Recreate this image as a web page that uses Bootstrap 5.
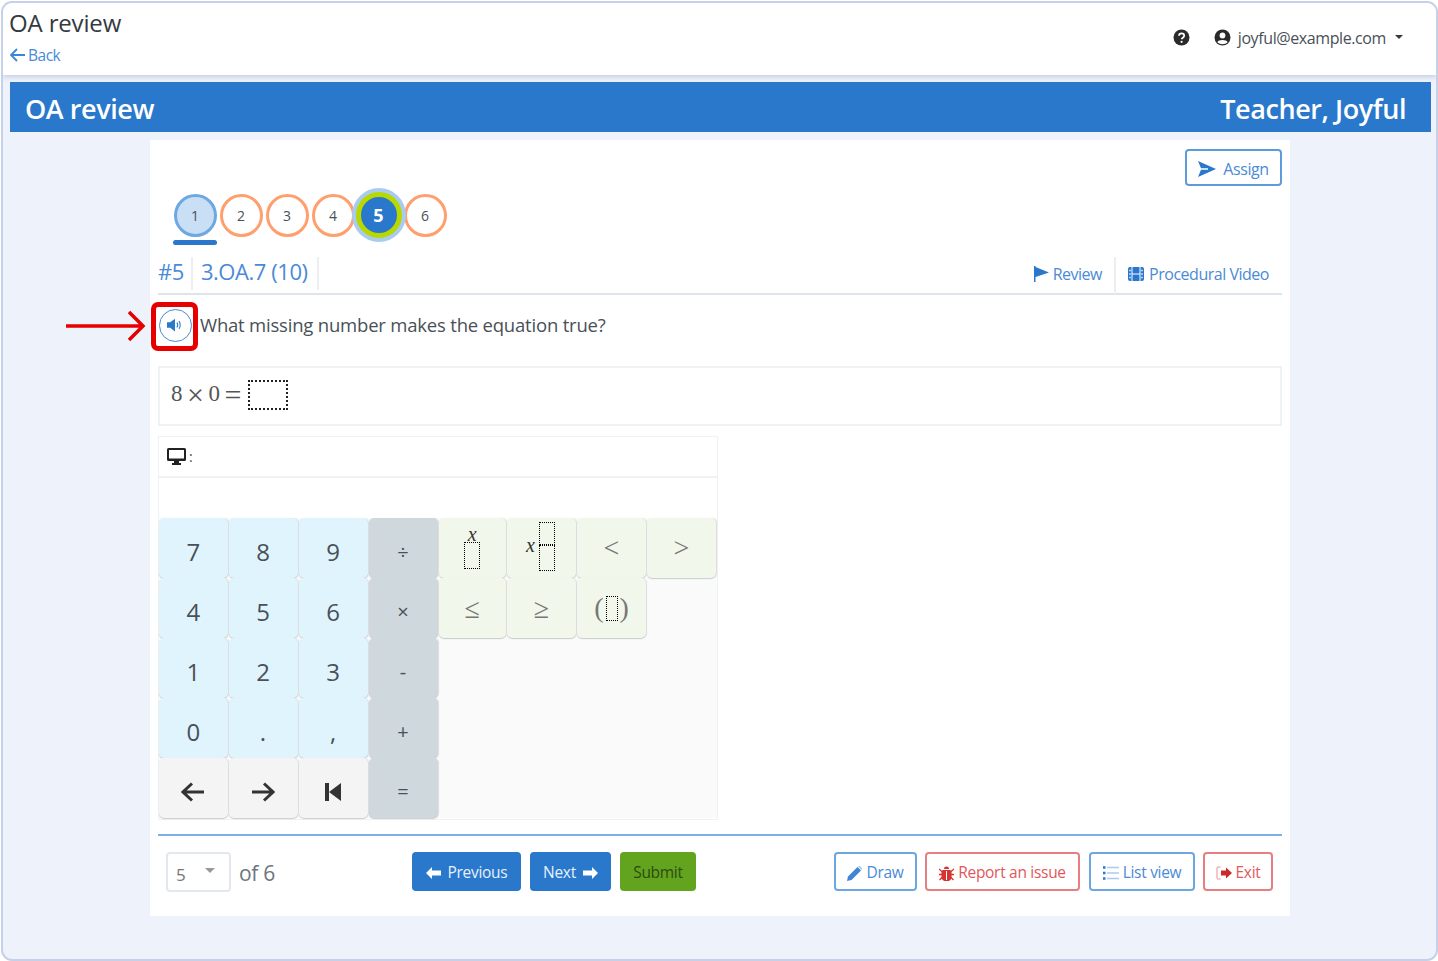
<!DOCTYPE html>
<html lang="en">
<head>
<meta charset="utf-8">
<title>OA review</title>
<link href="https://cdn.jsdelivr.net/npm/bootstrap@5.3.0/dist/css/bootstrap.min.css" rel="stylesheet">
<style>
html,body{height:961px;overflow:hidden;background:#fff}
body{font-family:"Open Sans","Noto Sans",sans-serif;color:#495057;font-size:16px;letter-spacing:-.3px}
a{text-decoration:none;color:#4a8ad6}
svg{display:block;flex:none}
.frame{margin:1px 0 0 1px;width:1437px;height:960px;border:2px solid #c6d0e8;border-radius:11px;background:#eef2fb;overflow:hidden;position:relative}
.topbar{height:72px;background:#fff;padding:4px 7px 0;box-shadow:0 2px 5px #c3cde2}
.apptitle{font-size:24px;font-weight:500;color:#343a40;line-height:32px;letter-spacing:-.15px;margin-left:-1px}
.backlink{font-size:15.5px;line-height:22px;margin-top:5px;gap:3px;letter-spacing:-.5px}
.usernav{margin:17px 26px 0 0;color:#343a40;gap:24px}
.usermail{font-size:16px;color:#495057;gap:7px;letter-spacing:-.4px}
.usermail span:first-of-type{padding-top:2px}
.caretdown{width:0;height:0;border-left:4px solid transparent;border-right:4px solid transparent;border-top:4px solid #343a40;margin:0 0 0 2px}
.banner{height:50px;margin:7px 5px 0 7px;background:#2a78cc;color:#fff;font-size:27px;font-weight:600;padding:2px 25px 0 15px;line-height:50px;letter-spacing:-.42px}
.sheet{width:1140px;height:776px;margin:8px 0 0 147px;background:#fff;padding:9px 8px 0;position:relative}
.assignbtn{width:97px;height:37px;border:2px solid #5e9bdd;border-radius:4px;color:#4a8ad6;gap:7px;font-size:16px;margin-left:auto;background:#fff;padding:2px 0 0;letter-spacing:-.4px}
.stepper{height:68px;padding-left:15.5px;margin-top:3px;gap:3px;align-items:flex-start}
.stepdot{width:43px;height:43px;border-radius:50%;border:3.5px solid #ff9f6e;color:#495057;font-size:14px;margin-top:5px;position:relative;background:#fff;flex:none;letter-spacing:0}
.stepdot.firstdot{background:#c9dff5;border-color:#6ea8e2;margin-right:0}
.stepdot.firstdot::after{content:"";position:absolute;left:-3.5px;right:-3.5px;bottom:-10.5px;height:4.5px;border-radius:3px;background:#2a78cc}
.stepdot.nowdot{background:#2a78cc;border:5px solid #b8d800;box-shadow:0 0 0 4px #a9cbef;color:#fff;font-weight:700;font-size:18px;width:46px;height:46px;margin:3px -1px 0 -2px;z-index:1}
.metarow{height:38px;border-bottom:2px solid #dfe3ec;color:#4a8ad6}
.metacell{font-size:22px;line-height:29px;padding-right:7px;border-right:2px solid #eceef2;height:33px;margin-right:8px;letter-spacing:-.45px}
.metacell+.metacell{padding-right:9px}
.metalink{font-size:16px;gap:4px;height:33px;letter-spacing:-.48px}
.filmlink{gap:5px;margin-right:13px}
.vsep{width:2px;height:37px;background:#eceef2;margin:0 12px 0 12px}
.promptrow{height:48px;margin-top:6px;font-size:18.5px;gap:1px;color:#495057;letter-spacing:-.2px}
.prompttext{margin-left:7.5px}
.soundbtn{width:33px;height:33px;border:1.5px solid #4a8ad6;border-radius:50%;background:#fff;margin-left:.5px}
.mathbox{height:60px;border:2px solid #f0f1f3;margin-top:17px;padding:0 0 3px 11px;gap:4.5px;font-family:"Liberation Serif",serif;font-size:23px;letter-spacing:0;color:#555}
.bigsign{font-size:30px;line-height:30px}
.holebox{border:2px dotted #222;width:40px;height:30px;display:block;margin:1px 0 0 2.5px}
.padcard{width:560px;height:384px;border:1px solid #f0f1f3;margin-top:10px;background:#fff}
.padhead{height:41px;border-bottom:2px solid #f0f1f3;padding-left:8px;gap:3px;font-size:14px}
.padentry{height:40px}
.padgrid{display:grid;grid-template-columns:69.5px 70px 70px 70px 68.5px 70px 70px 70px;grid-auto-rows:60px;background:#fafafa;height:300px}
.padkey{border:0;padding:0;border-radius:5px;box-shadow:0 1px 1px #c9cccf,1px 0 1px #dcdfe2;margin:0 1px 0 0;display:flex;align-items:center;justify-content:center;color:#495057;font-size:24px;letter-spacing:0}
.numkey{background:#e0f4fe;padding-top:7px}
.navkey{background:#f4f4f4;color:#343a40;padding-top:7px}
.opkey{background:#cfd8dd;font-size:20px;padding-top:8px}
.mathkey{background:#f1f7ea;font-family:"Liberation Serif",serif;color:#777;font-size:28px}
.mathkey i{font-family:"Liberation Serif",serif;color:#333;font-size:20px;line-height:15px}
.mathkey i.sidex{margin:0 4.5px 5px -1.5px}
.stackcells{margin-bottom:4px}
.rowtwo{padding-top:2px}
.dotcell{border:1px dotted #000;width:16px;display:block}
.cellfull{height:27px}
.celltop{height:23px}
.cellbottom{height:26px}
.cellparen{height:25px;width:12px;margin:0 2px}
.bluerule{height:2px;background:#7cb0e6;margin-top:14px}
.footrow{margin-top:16px;padding:0 9px 0 8px;height:40px}
.pagepick{width:65px;height:40px;border:2px solid #e3e7ee;border-radius:4px;color:#777;font-size:17px;padding:9px 0 0 8px;position:relative;line-height:24px}
.pagepick::after{content:"";position:absolute;right:14px;top:14px;border-left:5px solid transparent;border-right:5px solid transparent;border-top:5px solid #999}
.ofsix{font-size:21px;color:#6c757d;margin:6px 137px 0 8px;letter-spacing:-.3px}
.navbtn{height:39px;padding:3px 0 0;border-radius:4px;font-size:15.5px;gap:7px;border:0;letter-spacing:-.3px}
.bluefill{background:#2a78cc;color:#e6f1fc}
.greenfill{background:#63a41e;color:#2c4a12}
.spacedbtn{margin-left:9px}
.wprev{width:109px}.wnext{width:81px}.wsubmit{width:76px}
.linebtn{height:39px;padding:3px 0 0;border-radius:4px;font-size:15.5px;gap:4px;background:#fff;letter-spacing:-.3px}
.wdraw{width:83px}.wreport{width:155px}.wlist{width:106px;margin-left:1px}.wexit{width:70px}
.blueline{border:2px solid #6ea6e2;color:#4a8ad6}
.redline{border:2px solid #e77f82;color:#e2575b}
.callout{position:absolute;left:148px;top:299px;width:47px;height:49px;border:5px solid #e60000;border-radius:7px;pointer-events:none}
.pointer{position:absolute;left:63px;top:307px}
</style>
</head>
<body>
<div class="frame">
  <header class="topbar d-flex justify-content-between">
    <div>
      <div class="apptitle">OA review</div>
      <a href="#" class="backlink d-flex align-items-center">
        <svg width="15" height="14" viewBox="0 0 15 14" fill="none" stroke="#3d85d8" stroke-width="1.8"><path d="M1 7h14M7 1 1 7l6 6"/></svg>Back
      </a>
    </div>
    <div class="usernav d-flex align-items-center align-self-start">
      <svg width="17" height="17" viewBox="0 0 17 17"><circle cx="8.5" cy="8.5" r="8" fill="#2b2b2b"/><path d="M6 6.8c0-3.2 5.2-3.2 5.2 0 0 2-2.5 1.800-2.500 3.500" fill="none" stroke="#fff" stroke-width="1.700"/><circle cx="8.600" cy="12.800" r="1.100" fill="#fff"/></svg>
      <div class="usermail d-flex align-items-center">
        <svg width="17" height="17" viewBox="0 0 17 17"><circle cx="8.500" cy="8.500" r="8" fill="#2b2b2b"/><circle cx="8.500" cy="6.500" r="2.900" fill="#fff"/><path d="M3.300 13.200c1-3 9.400-3 10.400 0-2.800 2.600-7.600 2.600-10.400 0z" fill="#fff"/></svg>
        <span>joyful@example.com</span><span class="caretdown"></span>
      </div>
    </div>
  </header>
  <div class="banner d-flex justify-content-between"><span>OA review</span><span>Teacher, Joyful</span></div>
  <main class="sheet">
    <button class="assignbtn btn d-flex align-items-center justify-content-center" type="button">
      <svg width="18" height="16" viewBox="0 0 18 16"><path d="M0 0 18 8 0 16 3 8.800h7V7.200H3z" fill="#2a78cc"/></svg>Assign
    </button>
    <div class="stepper d-flex">
      <div class="stepdot firstdot d-flex align-items-center justify-content-center">1</div>
      <div class="stepdot d-flex align-items-center justify-content-center">2</div>
      <div class="stepdot d-flex align-items-center justify-content-center">3</div>
      <div class="stepdot d-flex align-items-center justify-content-center">4</div>
      <div class="stepdot nowdot d-flex align-items-center justify-content-center">5</div>
      <div class="stepdot d-flex align-items-center justify-content-center">6</div>
    </div>
    <div class="metarow d-flex align-items-start">
      <div class="metacell">#5</div>
      <div class="metacell">3.OA.7 (10)</div>
      <a href="#" class="metalink d-flex align-items-center ms-auto">
        <svg width="15" height="16" viewBox="0 0 15 16"><path d="M0 0h1.500v1L15 6.500 1.500 11v5H0z" fill="#2a78cc"/></svg>Review
      </a>
      <div class="vsep"></div>
      <a href="#" class="metalink filmlink d-flex align-items-center">
        <svg width="16" height="14" viewBox="0 0 16 14"><rect width="16" height="14" rx="2" fill="#2a78cc"/><path d="M4 0v14M12 0v14M4 7h8" stroke="#fff" stroke-width="1"/><path d="M1 3.500h2M1 7h2M1 10.500h2M13 3.500h2M13 7h2M13 10.500h2" stroke="#bcd7f3" stroke-width="1.400"/></svg>Procedural Video
      </a>
    </div>
    <div class="promptrow d-flex align-items-center">
      <button class="soundbtn d-flex align-items-center justify-content-center p-0" type="button" aria-label="Play">
        <svg width="17" height="14" viewBox="0 0 16 13"><path d="M0 4h3l4.500-3.500v12L3 9H0z" fill="#2a78cc"/><path d="M9.300 4.200c.9 1.300.9 3.300 0 4.600M11.300 2.800c1.500 2 1.500 5.400 0 7.400" fill="none" stroke="#2a78cc"/></svg>
      </button>
      <div class="prompttext">What missing number makes the equation true?</div>
    </div>
    <div class="mathbox d-flex align-items-center"><span>8</span><span class="bigsign">×</span><span>0</span><span class="bigsign">=</span><span class="holebox"></span></div>
    <section class="padcard">
      <div class="padhead d-flex align-items-center">
        <svg width="19" height="17" viewBox="0 0 19 17"><path d="M1.500 0h16A1.500 1.500 0 0 1 19 1.500v10a1.500 1.500 0 0 1-1.500 1.500H12v2h2v2H5v-2h2v-2H1.500A1.500 1.500 0 0 1 0 11.500v-10A1.500 1.500 0 0 1 1.500 0zM2 2v8.500h15V2z" fill="#222"/></svg><span>:</span>
      </div>
      <div class="padentry"></div>
      <div class="padgrid">
        <button class="padkey numkey" type="button">7</button>
        <button class="padkey numkey" type="button">8</button>
        <button class="padkey numkey" type="button">9</button>
        <button class="padkey opkey" type="button">÷</button>
        <button class="padkey mathkey flex-column" type="button"><i>x</i><span class="dotcell cellfull"></span></button>
        <button class="padkey mathkey" type="button"><i class="sidex">x</i><span class="stackcells"><span class="dotcell celltop"></span><span class="dotcell cellbottom"></span></span></button>
        <button class="padkey mathkey" type="button">&lt;</button>
        <button class="padkey mathkey" type="button">&gt;</button>
        <button class="padkey numkey" type="button">4</button>
        <button class="padkey numkey" type="button">5</button>
        <button class="padkey numkey" type="button">6</button>
        <button class="padkey opkey" type="button">×</button>
        <button class="padkey mathkey rowtwo" type="button">≤</button>
        <button class="padkey mathkey rowtwo" type="button">≥</button>
        <button class="padkey mathkey" type="button">(<span class="dotcell cellparen"></span>)</button>
        <span></span>
        <button class="padkey numkey" type="button">1</button>
        <button class="padkey numkey" type="button">2</button>
        <button class="padkey numkey" type="button">3</button>
        <button class="padkey opkey" type="button">-</button>
        <span></span><span></span><span></span><span></span>
        <button class="padkey numkey" type="button">0</button>
        <button class="padkey numkey" type="button">.</button>
        <button class="padkey numkey" type="button">,</button>
        <button class="padkey opkey" type="button">+</button>
        <span></span><span></span><span></span><span></span>
        <button class="padkey navkey" type="button" aria-label="Left"><svg width="24" height="20" viewBox="0 0 24 20" fill="none" stroke="#333" stroke-width="3"><path d="M23 10H2M11 1.500 2 10l9 8.500"/></svg></button>
        <button class="padkey navkey" type="button" aria-label="Right"><svg width="24" height="20" viewBox="0 0 24 20" fill="none" stroke="#333" stroke-width="3"><path d="M1 10h21M13 1.500 22 10l-9 8.500"/></svg></button>
        <button class="padkey navkey" type="button" aria-label="Start"><svg width="16" height="18" viewBox="0 0 16 18"><path d="M0 0h4v18H0zM16 0v18L4 9z" fill="#333"/></svg></button>
        <button class="padkey opkey" type="button">=</button>
        <span></span><span></span><span></span><span></span>
      </div>
    </section>
    <div class="bluerule"></div>
    <div class="footrow d-flex align-items-start">
      <div class="pagepick">5</div>
      <div class="ofsix">of 6</div>
      <button class="navbtn bluefill wprev btn d-flex align-items-center justify-content-center" type="button">
        <svg width="15" height="12" viewBox="0 0 15 12"><path d="M6 0v3.500h9v5H6V12L0 6z" fill="#fff"/></svg>Previous
      </button>
      <button class="navbtn bluefill wnext spacedbtn btn d-flex align-items-center justify-content-center" type="button">
        Next<svg width="15" height="12" viewBox="0 0 15 12"><path d="M9 0v3.500H0v5h9V12l6-6z" fill="#fff"/></svg>
      </button>
      <button class="navbtn greenfill wsubmit spacedbtn btn d-flex align-items-center justify-content-center" type="button">Submit</button>
      <div class="ms-auto d-flex gap-2">
        <button class="linebtn blueline wdraw btn d-flex align-items-center justify-content-center" type="button">
          <svg width="15" height="15" viewBox="0 0 15 15"><path d="M0 15l1-4.500L10.500 1l3.500 3.500L4.500 14z" fill="#3d85d8"/><path d="M11 .5c1-1 2-.5 3 .5s1.500 2 .5 3z" fill="#a9cbef"/></svg>Draw
        </button>
        <button class="linebtn redline wreport btn d-flex align-items-center justify-content-center" type="button">
          <svg width="15" height="15" viewBox="0 0 15 15"><path d="M5 3a2.500 2.500 0 0 1 5 0zM3.500 4h8l1 2.500v5a5 4 0 0 1-10 0v-5z" fill="#d63333"/><path d="M0 3l3.500 3M15 3l-3.500 3M0 8.500h3M15 8.500h-3M.5 14l3-3M14.500 14l-3-3" stroke="#d63333" stroke-width="1.300"/><path d="M7.500 5v9" stroke="#fff"/></svg>Report an issue
        </button>
        <button class="linebtn blueline wlist btn d-flex align-items-center justify-content-center" type="button">
          <svg width="16" height="14" viewBox="0 0 16 14"><path d="M0 1.500h2.500M0 7h2.500M0 12.500h2.500" stroke="#2a78cc" stroke-width="2.500"/><path d="M4 1.500h12M4 7h12M4 12.500h12" stroke="#a9cbef" stroke-width="1.500"/></svg>List view
        </button>
        <button class="linebtn redline wexit btn d-flex align-items-center justify-content-center" type="button">
          <svg width="16" height="14" viewBox="0 0 16 14"><path d="M4.500 1H2.500A1.500 1.500 0 0 0 1 2.500v9A1.500 1.500 0 0 0 2.500 13h2" fill="none" stroke="#f0b4b5" stroke-width="1.500"/><path d="M10 1.500v3H5v5h5v3L16 7z" fill="#c92a2a"/></svg>Exit
        </button>
      </div>
    </div>
  </main>
  <svg class="pointer" width="80" height="32" viewBox="0 0 80 32" fill="none" stroke="#e60000" stroke-width="3.500" aria-hidden="true"><path d="M0 16h76M63 2l14 14-14 14"/></svg>
  <div class="callout"></div>
</div>
</body>
</html>
